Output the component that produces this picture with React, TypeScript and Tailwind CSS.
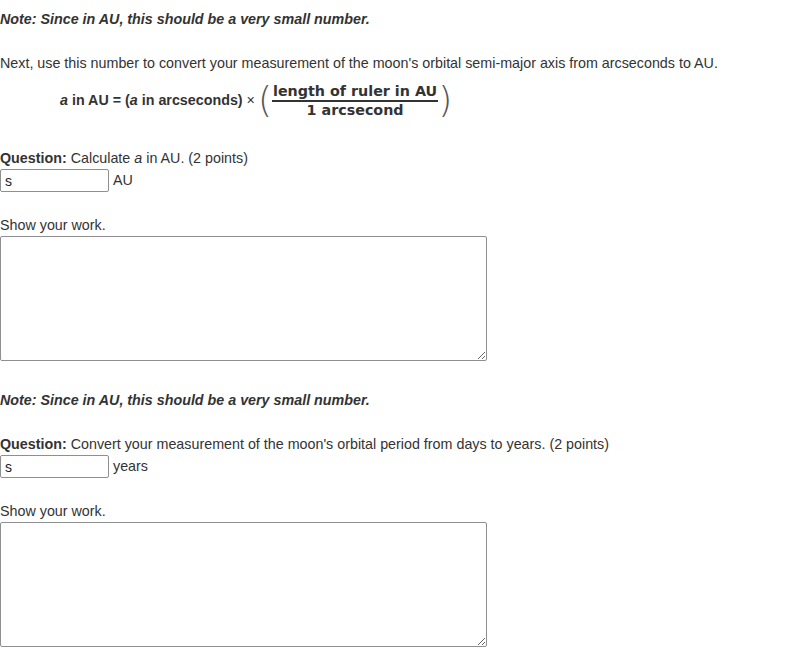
function Note() {
  return (
    <p className="h-5 leading-5 font-bold italic">
      Note: Since in AU, this should be a very small number.
    </p>
  );
}

function AnswerRow({ unit }: { unit: string }) {
  return (
    <div className="flex items-center h-[23px] mt-px">
      <input
        defaultValue="s"
        className="w-[109px] h-[23px] border border-[#8f8f8f] rounded-[2px] px-[4px] text-[14px] text-[#222] outline-none"
        style={{ fontFamily: '"Liberation Sans", Arial, sans-serif' }}
      />
      <span className="ml-[4px]">{unit}</span>
    </div>
  );
}

function WorkBox() {
  return (
    <>
      <p className="h-5 leading-5 mt-[23px]">Show your work.</p>
      <textarea className="block mt-px w-[487px] h-[125px] border border-[#8f8f8f] rounded-[2px] outline-none resize" />
    </>
  );
}

export default function App() {
  return (
    <div
      className="w-[807px] h-[670px] bg-white text-[14.3px] text-[#333] pt-[9px] overflow-hidden"
      style={{ fontFamily: '"Liberation Sans", Arial, sans-serif' }}
    >
      <Note />

      <p className="h-5 leading-5 mt-[24px]">
        Next, use this number to convert your measurement of the moon's orbital semi-major axis from arcseconds to AU.
      </p>

      {/* formula block */}
      <div className="flex items-center h-[36px] mt-[10px] ml-[60px] font-bold">
        <span>
          <i>a</i> in AU = (<i>a</i> in arcseconds) <span className="font-normal">×</span>
        </span>
        <div className="flex items-center ml-[3px] text-[#333]" style={{ fontFamily: '"DejaVu Sans", Verdana, sans-serif' }}>
          <span className="text-[36px] font-light leading-none text-[#555] -mt-[2px]">(</span>
          <div className="flex flex-col items-center text-[14.3px] leading-[17px]">
            <span className="border-b-2 border-[#333] px-[1px]">length of ruler in AU</span>
            <span>1 arcsecond</span>
          </div>
          <span className="text-[36px] font-light leading-none text-[#555] -mt-[2px]">)</span>
        </div>
      </div>

      <p className="h-5 leading-5 mt-[29px]">
        <b>Question:</b> Calculate <i>a</i> in AU. (2 points)
      </p>
      <AnswerRow unit="AU" />
      <WorkBox />

      <div className="mt-[29px]">
        <Note />
      </div>

      <p className="h-5 leading-5 mt-[24px]">
        <b>Question:</b> Convert your measurement of the moon's orbital period from days to years. (2 points)
      </p>
      <AnswerRow unit="years" />
      <WorkBox />
    </div>
  );
}
